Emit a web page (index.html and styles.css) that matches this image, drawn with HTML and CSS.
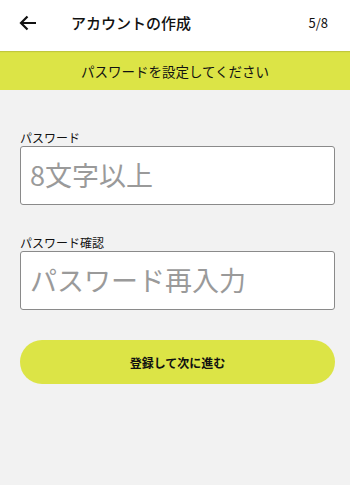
FILE: index.html
```html
<!DOCTYPE html>
<html lang="ja">
<head>
<meta charset="utf-8">
<link rel="stylesheet" href="styles.css">
</head>
<body>
<header class="topbar">
  <span class="back">
    <svg width="18" height="16" viewBox="0 0 18 16"><path d="M17 8H2.5M8.5 1.5L2 8l6.5 6.5" fill="none" stroke="#111" stroke-width="2.2"/></svg>
  </span>
  <span class="title">アカウントの作成</span>
  <span class="step">5/8</span>
</header>
<div class="banner">パスワードを設定してください</div>
<main class="form">
  <div class="field first">
    <label class="label">パスワード</label>
    <div class="input">8文字以上</div>
  </div>
  <div class="field">
    <label class="label">パスワード確認</label>
    <div class="input">パスワード再入力</div>
  </div>
  <div class="button">登録して次に進む</div>
</main>
</body>
</html>
```
FILE: styles.css
```css
html, body {
  margin: 0;
  padding: 0;
  background: #f2f2f2;
  font-family: "Noto Sans CJK JP", "Noto Sans", sans-serif;
  color: #111;
  height: 485px;
}
.topbar {
  height: 51px;
  background: #fff;
  display: flex;
  align-items: center;
  padding: 0 22px 0 19px;
  box-sizing: border-box;
  position: relative;
  z-index: 1;
  box-shadow: 0 1px 1px rgba(0,0,0,0.12);
}
.back {
  width: 18px;
  height: 16px;
  display: flex;
  margin-top: -5px;
}
.title {
  margin-left: 34px;
  font-size: 15px;
  font-weight: 500;
  flex: 1;
  margin-top: -6px;
}
.step {
  font-size: 13px;
  margin-top: -6px;
}
.banner {
  height: 39px;
  background: #dce446;
  display: flex;
  align-items: center;
  justify-content: center;
  font-size: 13.5px;
}
.form {
  padding: 0 15px 0 20px;
  display: flex;
  flex-direction: column;
}
.field {
  display: flex;
  flex-direction: column;
  margin-top: 29px;
}
.field.first {
  margin-top: 39px;
}
.label {
  font-size: 12px;
  line-height: 17px;
  height: 17px;
}
.input {
  height: 59px;
  box-sizing: border-box;
  background: #fff;
  border: 1px solid #8a8a8a;
  border-radius: 3px;
  font-size: 27px;
  color: #9a9a9a;
  display: flex;
  align-items: center;
  padding-left: 9px;
  padding-bottom: 2px;
}
.button {
  margin-top: 30px;
  height: 44px;
  border-radius: 22px;
  background: #dce446;
  display: flex;
  align-items: center;
  justify-content: center;
  font-size: 12px;
  font-weight: 700;
}
```
